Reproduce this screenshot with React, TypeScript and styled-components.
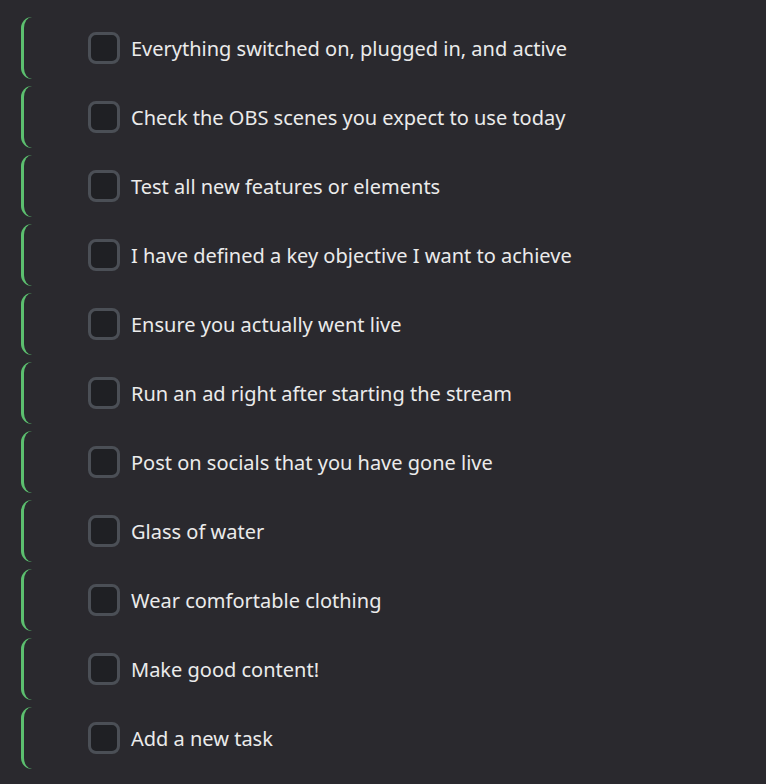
import React from "react";
import styled, { createGlobalStyle } from "styled-components";

const Global = createGlobalStyle`
  html, body {
    margin: 0;
    padding: 0;
    background: #2a292e;
  }
  body {
    font-family: "Noto Sans", "Open Sans", sans-serif;
  }
`;

const List = styled.ul`
  list-style: none;
  margin: 0;
  padding: 17px 0 0 21px;
  display: flex;
  flex-direction: column;
  gap: 7px;
`;

const Row = styled.li`
  height: 62px;
  box-sizing: border-box;
  border-left: 3px solid #5cbf6f;
  border-radius: 11px 0 0 11px;
  display: flex;
  align-items: center;
  padding-left: 64px;
  gap: 11px;
`;

const Box = styled.span`
  width: 32px;
  height: 32px;
  box-sizing: border-box;
  border: 3px solid #4b4f56;
  border-radius: 8px;
  background: #1f2024;
  flex: none;
`;

const Label = styled.span`
  color: #ebebeb;
  font-size: 20px;
  padding-top: 1px;
`;

const tasks = [
  "Everything switched on, plugged in, and active",
  "Check the OBS scenes you expect to use today",
  "Test all new features or elements",
  "I have defined a key objective I want to achieve",
  "Ensure you actually went live",
  "Run an ad right after starting the stream",
  "Post on socials that you have gone live",
  "Glass of water",
  "Wear comfortable clothing",
  "Make good content!",
  "Add a new task",
];

export default function App() {
  return (
    <>
      <Global />
      <List>
        {tasks.map((t) => (
          <Row key={t}>
            <Box />
            <Label>{t}</Label>
          </Row>
        ))}
      </List>
    </>
  );
}
